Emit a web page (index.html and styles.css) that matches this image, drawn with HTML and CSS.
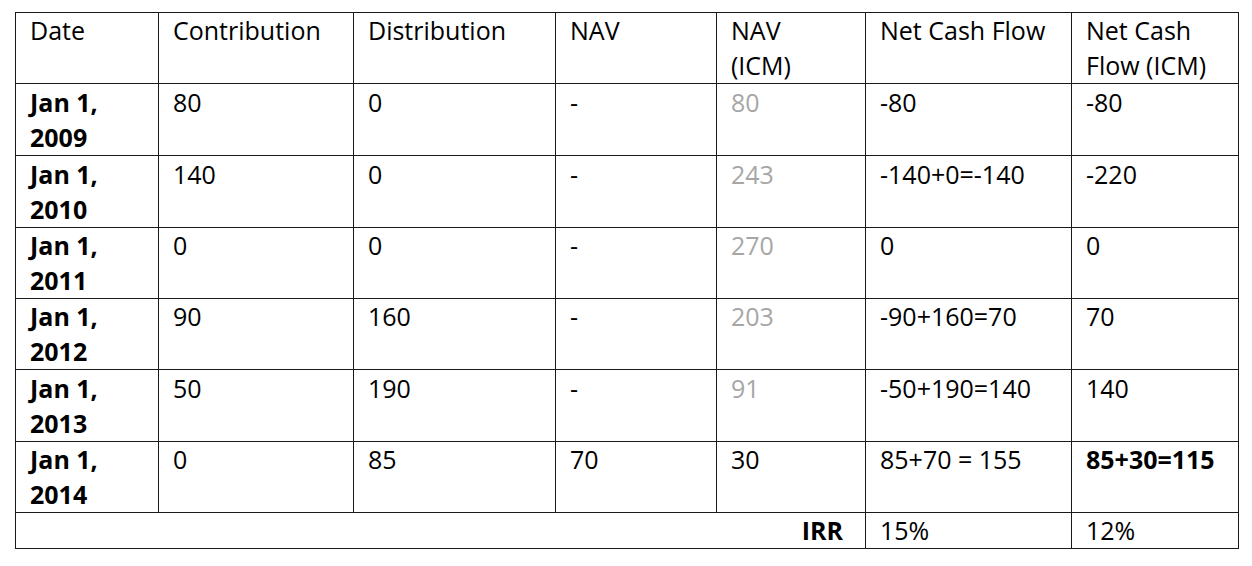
FILE: index.html
```html
<!DOCTYPE html>
<html>
<head>
<meta charset="utf-8">
<link rel="stylesheet" href="styles.css">
</head>
<body>
<table class="cf-table">
  <colgroup>
    <col class="c-date">
    <col class="c-contrib">
    <col class="c-dist">
    <col class="c-nav">
    <col class="c-navicm">
    <col class="c-ncf">
    <col class="c-ncficm">
  </colgroup>
  <thead>
    <tr>
      <th>Date</th>
      <th>Contribution</th>
      <th>Distribution</th>
      <th>NAV</th>
      <th>NAV<br>(ICM)</th>
      <th>Net Cash Flow</th>
      <th>Net Cash<br>Flow (ICM)</th>
    </tr>
  </thead>
  <tbody>
    <tr class="tall">
      <td class="date">Jan 1,<br>2009</td>
      <td>80</td>
      <td>0</td>
      <td>-</td>
      <td class="muted">80</td>
      <td>-80</td>
      <td>-80</td>
    </tr>
    <tr class="tall">
      <td class="date">Jan 1,<br>2010</td>
      <td>140</td>
      <td>0</td>
      <td>-</td>
      <td class="muted">243</td>
      <td>-140+0=-140</td>
      <td>-220</td>
    </tr>
    <tr>
      <td class="date">Jan 1,<br>2011</td>
      <td>0</td>
      <td>0</td>
      <td>-</td>
      <td class="muted">270</td>
      <td>0</td>
      <td>0</td>
    </tr>
    <tr>
      <td class="date">Jan 1,<br>2012</td>
      <td>90</td>
      <td>160</td>
      <td>-</td>
      <td class="muted">203</td>
      <td>-90+160=70</td>
      <td>70</td>
    </tr>
    <tr class="tall">
      <td class="date">Jan 1,<br>2013</td>
      <td>50</td>
      <td>190</td>
      <td>-</td>
      <td class="muted">91</td>
      <td>-50+190=140</td>
      <td>140</td>
    </tr>
    <tr>
      <td class="date">Jan 1,<br>2014</td>
      <td>0</td>
      <td>85</td>
      <td>70</td>
      <td>30</td>
      <td>85+70 = 155</td>
      <td class="strong">85+30=115</td>
    </tr>
    <tr class="irr-row">
      <td colspan="5" class="irr-label">IRR</td>
      <td>15%</td>
      <td>12%</td>
    </tr>
  </tbody>
</table>
</body>
</html>
```

FILE: styles.css
```css
html, body {
  margin: 0;
  padding: 0;
  background: #ffffff;
}

body {
  padding: 12px 0 0 15px;
  font-family: "Open Sans", "Liberation Sans", sans-serif;
  color: #000000;
}

.cf-table {
  border-collapse: collapse;
  table-layout: fixed;
  width: 1223px;
  font-size: 25px;
  line-height: 35px;
}

.c-date { width: 143px; }
.c-contrib { width: 195px; }
.c-dist { width: 202px; }
.c-nav { width: 161px; }
.c-navicm { width: 149px; }
.c-ncf { width: 206px; }
.c-ncficm { width: 167px; }

.cf-table th,
.cf-table td {
  border: 1px solid #1a1a1a;
  padding: 0 8px 0 14px;
  text-align: left;
  vertical-align: top;
  font-weight: normal;
  white-space: nowrap;
}

.cf-table tr.tall td {
  padding-top: 1px;
}

.cf-table td.date,
.cf-table td.strong {
  font-weight: bold;
}

.cf-table td.muted {
  color: #a6a6a6;
}

.cf-table .irr-row td {
  height: 36px;
  box-sizing: border-box;
}

.cf-table td.irr-label {
  text-align: right;
  font-weight: bold;
  padding-right: 22px;
}
```
